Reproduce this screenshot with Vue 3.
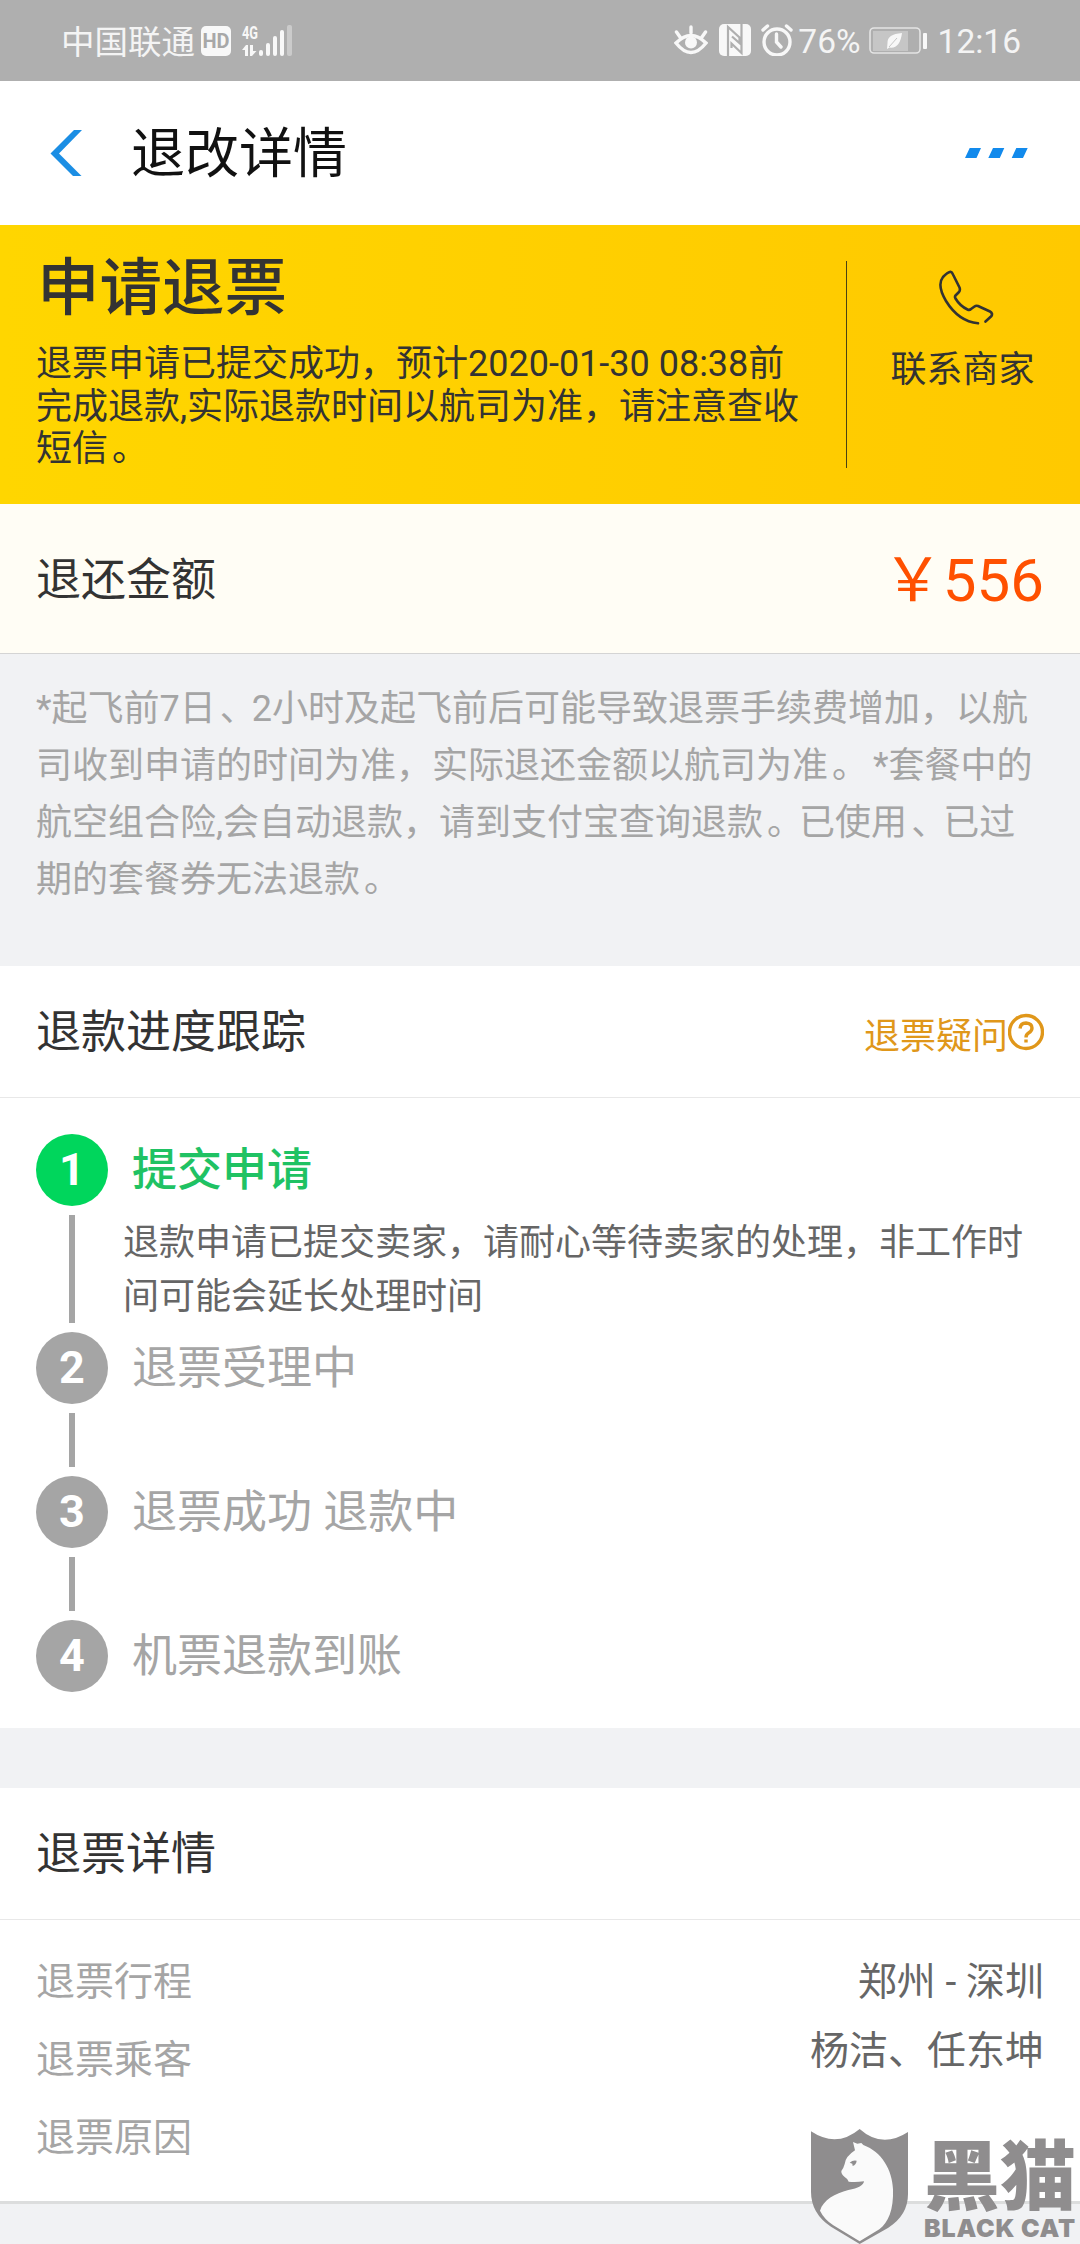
<script setup>
const steps = [
  {
    title: '提交申请',
    desc: '退款申请已提交卖家，请耐心等待卖家的处理，非工作时间可能会延长处理时间',
    active: true,
  },
  { title: '退票受理中' },
  { title: '退票成功 退款中' },
  { title: '机票退款到账' },
]
const labels = ['退票行程', '退票乘客', '退票原因']
const values = ['郑州 - 深圳', '杨洁、任东坤']
</script>

<template>
  <div class="screen">
    <header class="status">
      <span class="carrier">中国联通</span>
      <span class="hd">HD</span>
      <svg class="signal" width="52" height="38" viewBox="0 -4 52 38">
        <text x="1" y="15" textLength="16" lengthAdjust="spacingAndGlyphs">4G</text>
        <path d="M1 26l4-5h2v11h-3v-6zM9 21h3v6h3.500l-4.500 5h-2z" />
        <rect x="18" y="26" width="4" height="6" rx="2" />
        <rect x="25" y="19" width="4" height="13" rx="2" />
        <rect x="32" y="12" width="4" height="20" rx="2" />
        <rect x="39" y="6" width="4" height="26" rx="2" />
        <rect class="faint" x="46" y="1" width="5" height="31" rx="2" />
      </svg>
      <div class="status-right">
        <svg class="eye" width="34" height="32" viewBox="0 0 34 32">
          <path class="line" d="M2 19Q17 4 32 19Q17 38 2 19zM17 3v6M2.500 8l3.500 5M31.500 8l-3.500 5" />
          <circle cx="17" cy="18.500" r="6" />
        </svg>
        <svg class="nfc" width="32" height="32" viewBox="0 0 32 32">
          <rect width="32" height="32" rx="5" />
          <path class="slit" d="M9 32V3L20.500 13.500V19L13 12.500M22.500 0V29L12.500 19.500V24" />
        </svg>
        <svg class="alarm" width="32" height="32" viewBox="0 0 32 32">
          <circle class="line" cx="16" cy="18" r="13" />
          <path class="line" d="M15.500 10v8l4.500 5M2 6l4.500-4M30 6l-4.500-4" />
        </svg>
        <span class="percent">76%</span>
        <svg class="battery" width="59" height="28" viewBox="0 0 59 28">
          <rect x="1" y="1" width="50" height="25" rx="4" fill="none" stroke="#e4e4e4" stroke-width="1.600" />
          <rect x="4" y="4" width="35" height="20" fill="#c6c6c6" />
          <path d="M33 6Q18 7 18.500 16L18 22L20.500 20.500Q31 22 33 6z" />
          <path d="M20 20L28 11" stroke="#c6c6c6" stroke-width="1" />
          <rect x="54" y="6" width="4" height="16" rx="1" />
        </svg>
        <span class="clock">12:16</span>
      </div>
    </header>

    <nav class="nav">
      <svg class="back" width="33" height="48" viewBox="0 0 33 48">
        <path d="M24 1H32L9 24.500L31.500 47H23L0.500 24.500z" />
      </svg>
      <h1>退改详情</h1>
      <svg class="more" width="64" height="10" viewBox="0 0 64 10">
        <path d="M4.700 0H16L11.500 10H0zM28 0H39.300L34.800 10H23.300zM51.300 0H62.700L58 10H46.700z" />
      </svg>
    </nav>

    <section class="banner">
      <div class="banner-main">
        <h2>申请退票</h2>
        <p>退票申请已提交成功，预计2020-01-30 08:38前完成退款,实际退款时间以航司为准，请注意查收短信<span class="stop">。</span></p>
      </div>
      <div class="contact">
        <svg width="60" height="60" viewBox="0 0 60 60">
          <path d="M42 55.300C29 54 18 46 10 33C3.500 22 3 14 7 9Q12 4 14.500 3.700Q16 4 17 6.500L23.500 19.500Q24.500 22 23 24L19.500 27.500Q18.500 29 19.500 30.500Q24 38 31.500 41.500Q33.500 42.500 35 41L38.500 38.500Q40 37.400 42 38L54 43.500Q57 45 55.500 48L49.500 53.500" />
        </svg>
        <span>联系商家</span>
      </div>
    </section>

    <section class="amount">
      <span class="amount-label">退还金额</span>
      <span class="price">￥556</span>
    </section>

    <p class="note">*起飞前7日<span class="stop">、</span>2小时及起飞前后可能导致退票手续费增加，以航司收到申请的时间为准，实际退还金额以航司为准<span class="stop">。</span> *套餐中的航空组合险,会自动退款，请到支付宝查询退款<span class="stop">。</span>已使用<span class="stop">、</span>已过期的套餐券无法退款<span class="stop">。</span></p>

    <section class="card progress">
      <div class="card-head">
        <h3>退款进度跟踪</h3>
        <a class="help">
          <span>退票疑问</span>
          <svg width="36" height="38" viewBox="0 0 36 38">
            <circle cx="18" cy="19" r="16.500" />
            <path d="M12 15.500Q12.500 10 18 10Q24 10.500 24 15Q24 18 20.500 20Q18 21.500 18 24.500M18 26.500v3" />
          </svg>
        </a>
      </div>
      <ol class="steps">
        <li v-for="(step, i) in steps" :key="i" class="step" :class="{ active: step.active }">
          <div class="rail">
            <span class="dot">{{ i + 1 }}</span>
            <i v-if="i < steps.length - 1" class="bar"></i>
          </div>
          <div class="step-body">
            <h4>{{ step.title }}</h4>
            <p v-if="step.desc">{{ step.desc }}</p>
          </div>
        </li>
      </ol>
    </section>

    <section class="card details">
      <div class="card-head">
        <h3>退票详情</h3>
      </div>
      <div class="info">
        <ul class="labels">
          <li v-for="label in labels" :key="label">{{ label }}</li>
        </ul>
        <ul class="values">
          <li v-for="value in values" :key="value">{{ value }}</li>
        </ul>
      </div>
    </section>

    <aside class="brand">
      <svg width="97" height="115" viewBox="93 87 291 345">
        <path class="cat-bg" d="M93 94Q170 145 239 87Q306 147 384 96V282Q384 345 325 383L239 432L153 380Q93 340 93 275z" />
        <path class="cat" d="M219 126L232 131L244 129L250 135C305 155 337 210 339 268C341 330 325 368 298 388L239 424L160 376Q132 357 120 332C130 300 165 280 205 270Q250 262 252 244Q225 248 206 245Q203 236 194 231Q183 222 184 213Q191 204 194 192Q196 170 225 151z" />
        <path class="cat-eye" d="M209 188Q219 179 230 182Q229 194 218 198L217 191z" />
      </svg>
      <div class="brand-words">
        <strong>黑猫</strong>
        <em>BLACK CAT</em>
      </div>
    </aside>
  </div>
</template>

<style>
body {
  margin: 0;
  background: #f1f2f4;
}
</style>

<style scoped>
.screen {
  position: relative;
  width: 1080px;
  height: 2244px;
  overflow: hidden;
  background: #f1f2f4;
  font-family: Roboto, "Noto Sans CJK SC", sans-serif;
  color: #333;
}

h1, h2, h3, h4, p, ol, ul {
  margin: 0;
  padding: 0;
  font-weight: 400;
  list-style: none;
}

svg {
  display: block;
  flex: none;
}

.stop {
  padding-left: 4px;
  letter-spacing: -4px;
}

.status {
  display: flex;
  align-items: flex-start;
  box-sizing: border-box;
  height: 81px;
  padding: 24px 59px 0 61px;
  background: #afafaf;
  color: #f4f4f4;
  white-space: nowrap;
}

.status svg {
  fill: #f8f8f8;
}

.status .line {
  fill: none;
  stroke: #f8f8f8;
  stroke-width: 3.4;
  stroke-linecap: round;
}

.status .slit {
  fill: none;
  stroke: #afafaf;
  stroke-width: 2.2;
}

.carrier {
  width: 140px;
  padding-top: 1px;
  font-size: 33.500px;
  line-height: 36px;
}

.hd {
  width: 30px;
  height: 30px;
  margin-top: 2px;
  border-radius: 5px;
  background: #f8f8f8;
  color: #a8a8a8;
  font-size: 20px;
  font-weight: 700;
  line-height: 31px;
  text-align: center;
}

.signal {
  margin: -4px 0 0 10px;
  overflow: visible;
}

.signal text {
  font-size: 19px;
  font-weight: 700;
}

.signal .faint {
  fill: #cbcbcb;
}

.status-right {
  display: flex;
  margin-left: auto;
}

.nfc {
  margin-left: 11px;
}

.alarm {
  margin-left: 10px;
}

.percent {
  margin-left: 5px;
  font-size: 33.500px;
  line-height: 35px;
}

.battery {
  margin: 3px 0 0 8px;
}

.clock {
  margin-left: 10px;
  font-size: 33.500px;
  line-height: 35px;
}

.nav {
  display: flex;
  align-items: center;
  box-sizing: border-box;
  height: 144px;
  padding: 0 51px 0 50px;
  background: #fff;
}

.back {
  fill: #1b8ee4;
}

.nav h1 {
  padding-top: 4px;
  margin-left: 48px;
  color: #111;
  font-size: 54px;
  line-height: 72px;
}

.more {
  margin-left: auto;
  fill: #128aec;
}

.banner {
  display: flex;
  align-items: flex-start;
  box-sizing: border-box;
  height: 279px;
  padding: 28px 0 0 36px;
  background: linear-gradient(90deg, #ffd600, #ffc900);
}

.banner-main {
  width: 810px;
}

.banner h2 {
  padding-left: 1px;
  font-size: 62.500px;
  font-weight: 500;
  line-height: 72px;
}

.banner p {
  width: 780px;
  margin-top: 18px;
  font-size: 36px;
  line-height: 42.500px;
}

.contact {
  display: flex;
  flex: 1;
  flex-direction: column;
  align-items: center;
  height: 207px;
  margin-top: 8px;
  border-left: 1px solid #4a4213;
}

.contact svg {
  margin: 7px 0 0 4px;
  fill: none;
  stroke: #333;
  stroke-width: 2.6;
  stroke-linecap: round;
  stroke-linejoin: round;
}

.contact span {
  margin: 22px 2px 0 0;
  font-size: 36px;
  line-height: 40px;
}

.amount {
  display: flex;
  align-items: center;
  justify-content: space-between;
  box-sizing: border-box;
  height: 150px;
  padding: 0 36px;
  border-bottom: 1px solid #d4d4d4;
  background: #fffdf5;
}

.amount-label {
  padding-bottom: 5px;
  font-size: 45px;
}

.price {
  padding-bottom: 9px;
  color: #ff5000;
  font-size: 60px;
}

.note {
  box-sizing: border-box;
  height: 312px;
  padding: 27px 36px 0;
  color: #a5a5a5;
  font-size: 36px;
  line-height: 57px;
}

.card {
  background: #fff;
}

.progress {
  height: 762px;
}

.card-head {
  display: flex;
  align-items: center;
  justify-content: space-between;
  box-sizing: border-box;
  height: 132px;
  padding: 0 36px;
  border-bottom: 1px solid #e8e8e8;
}

.card-head h3 {
  padding-top: 3px;
  font-size: 45px;
  line-height: 60px;
}

.help {
  display: flex;
  align-items: center;
  color: #e0971a;
  font-size: 36px;
}

.help span {
  padding-top: 2px;
}

.help svg {
  fill: none;
  stroke: #e0971a;
  stroke-width: 3.4;
}

.steps {
  padding: 36px 36px 0;
}

.step {
  display: flex;
  align-items: flex-start;
  color: #a5a5a5;
}

.rail {
  display: flex;
  flex: none;
  flex-direction: column;
  align-items: center;
  width: 72px;
}

.dot {
  width: 72px;
  height: 72px;
  border-radius: 50%;
  background: #a5a5a5;
  color: #fff;
  font-size: 45px;
  font-weight: 700;
  line-height: 72px;
  text-align: center;
}

.bar {
  width: 6px;
  height: 54px;
  margin: 9px 0;
  background: #a5a5a5;
}

.step-body h4 {
  padding: 2px 0 0 24px;
  font-size: 45px;
  line-height: 70px;
}

.active .dot {
  background: #00d65c;
}

.active .bar {
  height: 108px;
}

.active h4 {
  color: #1fc263;
  font-weight: 500;
}

.step-body p {
  width: 905px;
  padding-left: 15px;
  margin-top: 10px;
  color: #666;
  font-size: 36px;
  line-height: 54px;
}

.details {
  margin-top: 60px;
  height: 413px;
  border-bottom: 3px solid #dcdddd;
}

.info {
  display: flex;
  justify-content: space-between;
  padding: 23px 36px 0;
  font-size: 39px;
}

.labels {
  color: #a5a5a5;
  line-height: 78px;
}

.values {
  margin-top: 5px;
  color: #666;
  line-height: 68.500px;
  text-align: right;
}

.brand {
  position: absolute;
  top: 2129px;
  left: 811px;
  display: flex;
  align-items: flex-start;
}

.cat-bg {
  fill: #8f8d8e;
}

.cat {
  fill: #fafafa;
}

.cat-eye {
  fill: #8f8d8e;
}

.brand-words {
  display: flex;
  flex-direction: column;
  margin-left: 16px;
  color: #8f8d8e;
  white-space: nowrap;
}

.brand-words strong {
  height: 87px;
  font-family: "Noto Sans CJK SC", sans-serif;
  font-size: 76px;
  font-weight: 900;
  line-height: 84px;
}

.brand-words em {
  font-family: Inter, sans-serif;
  font-size: 25px;
  font-style: normal;
  font-weight: 900;
  letter-spacing: 0.8px;
  line-height: 25px;
}
</style>
